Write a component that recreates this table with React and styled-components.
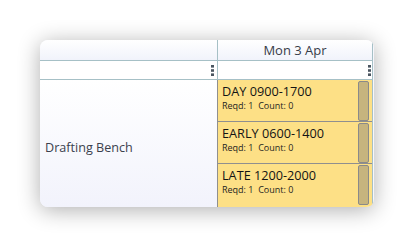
import React from 'react';
import styled, { createGlobalStyle } from 'styled-components';

const GlobalStyle = createGlobalStyle`
    html, body {
        margin: 0;
        padding: 0;
        background: #ffffff;
    }
`;

const shifts = [
    { name: 'DAY', hours: '0900-1700', reqd: 1, count: 0 },
    { name: 'EARLY', hours: '0600-1400', reqd: 1, count: 0 },
    { name: 'LATE', hours: '1200-2000', reqd: 1, count: 0 },
];

const MenuDots = () => (
    <svg width="3" height="11" viewBox="0 0 3 11">
        <rect x="0" y="0" width="3" height="2.6" fill="#4a5560" />
        <rect x="0" y="4.2" width="3" height="2.6" fill="#4a5560" />
        <rect x="0" y="8.4" width="3" height="2.6" fill="#4a5560" />
    </svg>
);

const App = () => {
    return (
        <Page>
            <GlobalStyle />
            <Card>
                <HeadCell />
                <HeadCell right>Mon 3 Apr</HeadCell>
                <ToolCell><MenuDots /></ToolCell>
                <ToolCell right><MenuDots /></ToolCell>
                <RowLabel>Drafting Bench</RowLabel>
                <ShiftColumn>
                    {shifts.map((item) => (
                        <Shift key={item.name}>
                            <ShiftText>
                                <ShiftTitle>{item.name} {item.hours}</ShiftTitle>
                                <ShiftInfo>Reqd: {item.reqd}&nbsp;&nbsp;Count: {item.count}</ShiftInfo>
                            </ShiftText>
                            <Handle />
                        </Shift>
                    ))}
                </ShiftColumn>
            </Card>
        </Page>
    );
};

const Page = styled.div`
    width: 414px;
    height: 247px;
    padding: 40px 0 0 40px;
    box-sizing: border-box;
    overflow: hidden;
`;
const Card = styled.div`
    width: 334px;
    height: 167px;
    border-radius: 8px;
    overflow: hidden;
    background: #f6f7fd;
    box-shadow: 0 3px 22px rgba(0, 0, 0, 0.32);
    display: grid;
    grid-template-columns: 177px 156px;
    grid-template-rows: 21px 19px 1fr;
    font-family: "Open Sans", "Liberation Sans", sans-serif;
`;
const HeadCell = styled.div`
    background: linear-gradient(#ffffff, #f1f3fb);
    border-bottom: 1px solid #a6c0c6;
    border-left: ${({right}) => right ? '1px solid #a6c0c6' : 'none'};
    border-right: ${({right}) => right ? '1px solid #a6c0c6' : 'none'};
    display: flex;
    align-items: center;
    justify-content: center;
    font-size: 13px;
    color: #363c48;
    padding-bottom: 1px;
`;
const ToolCell = styled.div`
    background: #ffffff;
    border-bottom: 1px solid #a6c0c6;
    border-left: ${({right}) => right ? '1px solid #a6c0c6' : 'none'};
    border-right: ${({right}) => right ? '1px solid #a6c0c6' : 'none'};
    display: flex;
    align-items: center;
    justify-content: flex-end;
    padding-right: ${({right}) => right ? '1px' : '3px'};
`;
const RowLabel = styled.div`
    background: linear-gradient(#ffffff, #f2f3fc);
    display: flex;
    align-items: center;
    padding-left: 5px;
    padding-top: 8px;
    font-size: 12.6px;
    color: #3b414d;
`;
const ShiftColumn = styled.div`
    border-left: 1px solid #8f8f8f;
    border-right: 1px solid #a6c0c6;
    background: #fde086;
    display: flex;
    flex-direction: column;
`;
const Shift = styled.div`
    flex: 0 0 auto;
    height: 42px;
    background: #fde086;
    border-bottom: 1px solid #8f8f8f;
    display: flex;
    padding: 1px 3px 1px 4px;
    box-sizing: border-box;

    &:last-child {
        border-bottom: none;
    }
`;
const ShiftText = styled.div`
    flex: 1;
    display: flex;
    flex-direction: column;
    padding-top: 2px;
`;
const ShiftTitle = styled.div`
    font-size: 12.7px;
    line-height: 16px;
    color: #141414;
`;
const ShiftInfo = styled.div`
    font-size: 9px;
    line-height: 14px;
    color: #1e1e1e;
`;
const Handle = styled.div`
    width: 11px;
    height: 40px;
    box-sizing: border-box;
    border: 1px solid #8a8a8a;
    border-radius: 2px;
    background: #c6b47e;
`;

export default App;
